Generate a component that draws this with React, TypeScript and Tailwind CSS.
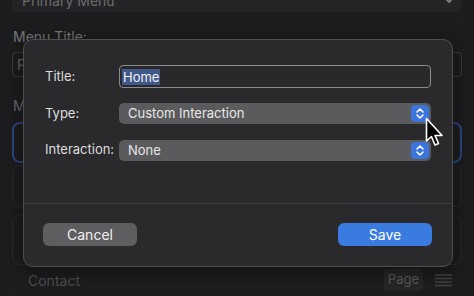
import React from "react";

const font = { fontFamily: "Inter, 'Noto Sans', sans-serif" };

const Stepper: React.FC = () => (
  <div className="flex h-[17px] w-[18px] items-center justify-center rounded-[4px] bg-[#3b74db]">
    <svg width="10" height="13" viewBox="0 0 10 13" fill="none">
      <path
        d="M2 5 L5 2 L8 5 M2 8 L5 11 L8 8"
        stroke="white"
        strokeWidth="1.6"
        strokeLinecap="round"
        strokeLinejoin="round"
      />
    </svg>
  </div>
);

const SelectBox: React.FC<{ value: string }> = ({ value }) => (
  <div className="flex h-[21px] items-center justify-between rounded-[5px] bg-[#5b5b5d] pl-[9px] pr-[2px]">
    <span className="text-[13px] text-[#e8e8e8]">{value}</span>
    <Stepper />
  </div>
);

const App: React.FC = () => {
  return (
    <div
      className="relative h-[296px] w-[474px] overflow-hidden bg-[#1d1d1f]"
      style={font}
    >
      {/* page behind the sheet */}
      <div className="flex flex-col px-[12px]">
        <div className="-mt-[12px] flex h-[24px] items-center justify-between rounded-[5px] bg-[#242426] pl-[10px] pr-[8px]">
          <span className="text-[14px] text-[#6c6c6e]">Primary Menu</span>
          <svg width="10" height="8" viewBox="0 0 10 8" fill="none">
            <path d="M1 2 L5 6 L9 2" stroke="#8a8a8c" strokeWidth="1.6" />
          </svg>
        </div>
        <div className="mt-[16px] pl-[1px] text-[14px] leading-[18px] text-[#7a7a7c]">
          Menu Title:
        </div>
        <div className="mt-[6px] flex h-[25px] items-center rounded-[4px] border border-[#3c3c3e] px-[4px] text-[14px] text-[#6a6a6c]">
          Primary
        </div>
        <div className="mt-[20px] pl-[1px] text-[14px] leading-[18px] text-[#6a6a6c]">
          Menu Items:
        </div>
        <div className="mt-[7px] flex flex-col">
          <div className="h-[41px] rounded-[8px] border-2 border-[#2c4580]" />
          <div className="mt-[2px] h-[42px] rounded-[8px] border border-[#2a2a2c]" />
          <div className="mt-[8px] h-[50px] rounded-[8px] border border-[#2a2a2c]" />
          <div className="mt-[3px] flex h-[24px] items-center justify-between pl-[16px] pr-[10px]">
            <span className="text-[14px] text-[#4f4f51]">Contact</span>
            <div className="flex items-center gap-[12px]">
              <span className="rounded-[3px] bg-[#262628] px-[4px] py-[1px] text-[13px] text-[#5a5a5c]">
                Page
              </span>
              <svg width="17" height="14" viewBox="0 0 17 14" fill="none">
                <path
                  d="M0 2 H17 M0 5.5 H17 M0 9 H17 M0 12.5 H17"
                  stroke="#434345"
                  strokeWidth="1.4"
                />
              </svg>
            </div>
          </div>
        </div>
      </div>

      {/* sheet */}
      <div className="absolute left-[23px] top-[39px] flex h-[228px] w-[430px] flex-col rounded-[10px] border border-[#4e4e50] bg-[#2a2a2c] shadow-[0_4px_20px_rgba(0,0,0,0.5)]">
        <div className="grid grid-cols-[74px_312px] items-center gap-y-[15px] pl-[21px] pt-[25px]">
          <span className="text-[13px] text-[#dedede]">Title:</span>
          <div className="flex h-[23px] items-center rounded-[4px] border-[1.5px] border-[#8c8c8e] bg-[#29292b] pl-[2px]">
            <span className="bg-[#40598a] px-[1px] text-[13px] leading-[16px] text-[#f2f2f2]">
              Home
            </span>
          </div>
          <span className="text-[13px] text-[#dedede]">Type:</span>
          <SelectBox value="Custom Interaction" />
          <span className="text-[13px] text-[#dedede]">Interaction:</span>
          <div className="mt-[1px]">
            <SelectBox value="None" />
          </div>
        </div>
        <div className="mt-[42px] h-px bg-[#3d3d3f]" />
        <div className="flex justify-between pl-[19px] pr-[20px] pt-[19px]">
          <button className="h-[23px] w-[94px] rounded-[6px] bg-[#5e5e60] text-[14px] text-[#f0f0f0]">
            Cancel
          </button>
          <button className="h-[23px] w-[94px] rounded-[6px] bg-[#3a7be0] text-[14px] text-white">
            Save
          </button>
        </div>
      </div>

      {/* mouse pointer */}
      <svg
        className="absolute left-[425px] top-[117px]"
        width="20"
        height="31"
        viewBox="0 0 20 31"
        fill="none"
      >
        <path
          d="M1.5 1.5 L1.5 24 L6.5 19.5 L10 28 L13.5 26.5 L10 18.5 L17 18.5 Z"
          fill="black"
          stroke="white"
          strokeWidth="1.6"
          strokeLinejoin="round"
        />
      </svg>
    </div>
  );
};

export default App;
